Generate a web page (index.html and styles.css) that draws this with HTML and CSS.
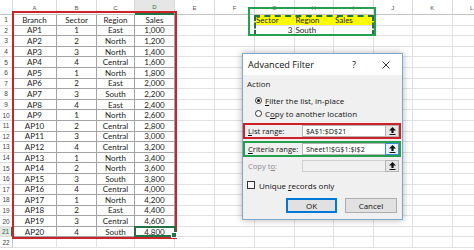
FILE: index.html
```html
<!DOCTYPE html>
<html>
<head>
<meta charset="utf-8">
<link rel="stylesheet" href="styles.css">
</head>
<body>
<div class="sheet">
  <div class="grid">
    <div class="h corner"></div><div class="h">A</div><div class="h">B</div><div class="h">C</div><div class="h sel">D</div><div class="h">E</div><div class="h">F</div><div class="h">G</div><div class="h">H</div><div class="h">I</div><div class="h">J</div><div class="h">K</div><div class="h">L</div>
    <div class="rn">1</div><div class="c t">Branch</div><div class="c t">Sector</div><div class="c t">Region</div><div class="c t">Sales</div><div class="c"></div><div class="c"></div><div class="c y">Sector</div><div class="c y">Region</div><div class="c y">Sales</div><div class="c"></div><div class="c"></div><div class="c"></div>
    <div class="rn">2</div><div class="c t">AP1</div><div class="c t">1</div><div class="c t">East</div><div class="c t">1,000</div><div class="c"></div><div class="c"></div><div class="c r">3</div><div class="c l">South</div><div class="c"></div><div class="c"></div><div class="c"></div><div class="c"></div>
    <div class="rn">3</div><div class="c t">AP2</div><div class="c t">2</div><div class="c t">North</div><div class="c t">1,200</div><div class="c"></div><div class="c"></div><div class="c"></div><div class="c"></div><div class="c"></div><div class="c"></div><div class="c"></div><div class="c"></div>
    <div class="rn">4</div><div class="c t">AP3</div><div class="c t">3</div><div class="c t">North</div><div class="c t">1,400</div><div class="c"></div><div class="c"></div><div class="c"></div><div class="c"></div><div class="c"></div><div class="c"></div><div class="c"></div><div class="c"></div>
    <div class="rn">5</div><div class="c t">AP4</div><div class="c t">4</div><div class="c t">Central</div><div class="c t">1,600</div><div class="c"></div><div class="c"></div><div class="c"></div><div class="c"></div><div class="c"></div><div class="c"></div><div class="c"></div><div class="c"></div>
    <div class="rn">6</div><div class="c t">AP5</div><div class="c t">1</div><div class="c t">North</div><div class="c t">1,800</div><div class="c"></div><div class="c"></div><div class="c"></div><div class="c"></div><div class="c"></div><div class="c"></div><div class="c"></div><div class="c"></div>
    <div class="rn">7</div><div class="c t">AP6</div><div class="c t">2</div><div class="c t">East</div><div class="c t">2,000</div><div class="c"></div><div class="c"></div><div class="c"></div><div class="c"></div><div class="c"></div><div class="c"></div><div class="c"></div><div class="c"></div>
    <div class="rn">8</div><div class="c t">AP7</div><div class="c t">3</div><div class="c t">South</div><div class="c t">2,200</div><div class="c"></div><div class="c"></div><div class="c"></div><div class="c"></div><div class="c"></div><div class="c"></div><div class="c"></div><div class="c"></div>
    <div class="rn">9</div><div class="c t">AP8</div><div class="c t">4</div><div class="c t">East</div><div class="c t">2,400</div><div class="c"></div><div class="c"></div><div class="c"></div><div class="c"></div><div class="c"></div><div class="c"></div><div class="c"></div><div class="c"></div>
    <div class="rn">10</div><div class="c t">AP9</div><div class="c t">1</div><div class="c t">North</div><div class="c t">2,600</div><div class="c"></div><div class="c"></div><div class="c"></div><div class="c"></div><div class="c"></div><div class="c"></div><div class="c"></div><div class="c"></div>
    <div class="rn">11</div><div class="c t">AP10</div><div class="c t">2</div><div class="c t">Central</div><div class="c t">2,800</div><div class="c"></div><div class="c"></div><div class="c"></div><div class="c"></div><div class="c"></div><div class="c"></div><div class="c"></div><div class="c"></div>
    <div class="rn">12</div><div class="c t">AP11</div><div class="c t">3</div><div class="c t">Central</div><div class="c t">3,000</div><div class="c"></div><div class="c"></div><div class="c"></div><div class="c"></div><div class="c"></div><div class="c"></div><div class="c"></div><div class="c"></div>
    <div class="rn">13</div><div class="c t">AP12</div><div class="c t">4</div><div class="c t">Central</div><div class="c t">3,200</div><div class="c"></div><div class="c"></div><div class="c"></div><div class="c"></div><div class="c"></div><div class="c"></div><div class="c"></div><div class="c"></div>
    <div class="rn">14</div><div class="c t">AP13</div><div class="c t">1</div><div class="c t">North</div><div class="c t">3,400</div><div class="c"></div><div class="c"></div><div class="c"></div><div class="c"></div><div class="c"></div><div class="c"></div><div class="c"></div><div class="c"></div>
    <div class="rn">15</div><div class="c t">AP14</div><div class="c t">2</div><div class="c t">North</div><div class="c t">3,600</div><div class="c"></div><div class="c"></div><div class="c"></div><div class="c"></div><div class="c"></div><div class="c"></div><div class="c"></div><div class="c"></div>
    <div class="rn">16</div><div class="c t">AP15</div><div class="c t">3</div><div class="c t">South</div><div class="c t">3,800</div><div class="c"></div><div class="c"></div><div class="c"></div><div class="c"></div><div class="c"></div><div class="c"></div><div class="c"></div><div class="c"></div>
    <div class="rn">17</div><div class="c t">AP16</div><div class="c t">4</div><div class="c t">Central</div><div class="c t">4,000</div><div class="c"></div><div class="c"></div><div class="c"></div><div class="c"></div><div class="c"></div><div class="c"></div><div class="c"></div><div class="c"></div>
    <div class="rn">18</div><div class="c t">AP17</div><div class="c t">1</div><div class="c t">North</div><div class="c t">4,200</div><div class="c"></div><div class="c"></div><div class="c"></div><div class="c"></div><div class="c"></div><div class="c"></div><div class="c"></div><div class="c"></div>
    <div class="rn">19</div><div class="c t">AP18</div><div class="c t">2</div><div class="c t">East</div><div class="c t">4,400</div><div class="c"></div><div class="c"></div><div class="c"></div><div class="c"></div><div class="c"></div><div class="c"></div><div class="c"></div><div class="c"></div>
    <div class="rn">20</div><div class="c t">AP19</div><div class="c t">3</div><div class="c t">Central</div><div class="c t">4,600</div><div class="c"></div><div class="c"></div><div class="c"></div><div class="c"></div><div class="c"></div><div class="c"></div><div class="c"></div><div class="c"></div>
    <div class="rn sel">21</div><div class="c t">AP20</div><div class="c t">4</div><div class="c t">South</div><div class="c t">4,800</div><div class="c"></div><div class="c"></div><div class="c"></div><div class="c"></div><div class="c"></div><div class="c"></div><div class="c"></div><div class="c"></div>
    <div class="rn">22</div><div class="c"></div><div class="c"></div><div class="c"></div><div class="c"></div><div class="c"></div><div class="c"></div><div class="c"></div><div class="c"></div><div class="c"></div><div class="c"></div><div class="c"></div><div class="c"></div>
  </div>

  <div class="overlay">
    <div class="active"></div>
    <div class="marquee"></div>
    <div class="box-green"></div>
    <div class="box-red"></div>
  </div>

  <div class="dialog">
    <div class="titlebar">
      <span class="title">Advanced Filter</span>
      <span class="help">?</span>
      <span class="close"><svg width="8" height="8" viewBox="0 0 8 8"><path d="M0.5 0.5L7.5 7.5M7.5 0.5L0.5 7.5" stroke="#222" stroke-width="0.9" fill="none"/></svg></span>
    </div>
    <div class="dbody">
      <div class="group">Action</div>
      <div class="radio"><span class="rb on"></span><span><u>F</u>ilter the list, in-place</span></div>
      <div class="radio"><span class="rb"></span><span>C<u>o</u>py to another location</span></div>
      <div class="field red">
        <span class="flabel"><u>L</u>ist range:</span>
        <span class="input">$A$1:$D$21</span>
        <span class="ref"><svg width="7" height="8" viewBox="0 0 7 8"><path d="M3.5 0L7 3.6H4.6V6H2.4V3.6H0Z" fill="#111"/><rect x="0.5" y="7" width="6" height="1" fill="#111"/></svg></span>
      </div>
      <div class="field green">
        <span class="flabel"><u>C</u>riteria range:</span>
        <span class="input">Sheet1!$G$1:$I$2</span>
        <span class="ref focus"><svg width="7" height="8" viewBox="0 0 7 8"><path d="M3.5 0L7 3.6H4.6V6H2.4V3.6H0Z" fill="#111"/><rect x="0.5" y="7" width="6" height="1" fill="#111"/></svg></span>
      </div>
      <div class="field copy">
        <span class="flabel dis">Copy t<u>o</u>:</span>
        <span class="input off"></span>
        <span class="ref"><svg width="7" height="8" viewBox="0 0 7 8"><path d="M3.5 0L7 3.6H4.6V6H2.4V3.6H0Z" fill="#111"/><rect x="0.5" y="7" width="6" height="1" fill="#111"/></svg></span>
      </div>
      <div class="check"><span class="cb"></span><span>Unique <u>r</u>ecords only</span></div>
      <div class="buttons">
        <span class="btn ok">OK</span>
        <span class="btn">Cancel</span>
      </div>
    </div>
  </div>
</div>
</body>
</html>
```

FILE: styles.css
```css
* { box-sizing: border-box; }
html, body { margin: 0; padding: 0; }
body {
  width: 474px;
  height: 250px;
  overflow: hidden;
  background: #fff;
  font-family: Lato, "Liberation Sans", sans-serif;
}
.sheet {
  position: relative;
  width: 474px;
  height: 250px;
  overflow: hidden;
}
.grid, .overlay {
  display: grid;
  grid-template-columns: 13px 44px 40px 38px 40px 40px 40px repeat(6, 39.5px);
  grid-template-rows: 15px repeat(22, 10.6px);
  width: 492px;
}
.overlay {
  position: absolute;
  left: 0;
  top: 0;
  pointer-events: none;
}

/* headers */
.h {
  border-right: 1px solid #d9d9d9;
  border-bottom: 1px solid #c4c4c4;
  font-family: "Liberation Sans", sans-serif;
  font-size: 6px;
  color: #555;
  display: flex;
  align-items: center;
  justify-content: center;
  padding-top: 1px;
}
.h.sel {
  background: #e6e6e6;
  border-bottom: 2px solid #217346;
  color: #217346;
}
.rn {
  border-right: 1px solid #c4c4c4;
  border-bottom: 1px solid #dcdcdc;
  font-family: "Liberation Sans", sans-serif;
  font-size: 6.5px;
  color: #444;
  display: flex;
  align-items: center;
  justify-content: center;
}
.rn.sel {
  background: #e6e6e6;
  border-right: 2px solid #217346;
  color: #217346;
}

/* cells */
.c {
  border-right: 1px solid #e1e1e1;
  border-bottom: 1px solid #e1e1e1;
  font-size: 8px;
  color: #222;
  display: flex;
  align-items: center;
  justify-content: center;
  white-space: nowrap;
  overflow: hidden;
}
.c.t { border-color: #a3a3a3; }
.c.y {
  background: #ffff00;
  justify-content: flex-start;
  padding-left: 1px;
  border-right-color: #ffff00;
}
.c.r { justify-content: flex-end; padding-right: 1px; }
.c.l { justify-content: flex-start; padding-left: 1px; }

/* overlays on the sheet grid */
.active {
  grid-column: 5;
  grid-row: 22;
  margin: -1px -1px 0 -1px;
  border: 2px solid #217346;
  position: relative;
}
.active::after {
  content: "";
  position: absolute;
  right: -3px;
  bottom: -3px;
  width: 4px;
  height: 4px;
  background: #217346;
  border: 1px solid #fff;
}
.marquee {
  grid-column: 8 / 11;
  grid-row: 2 / 4;
  margin: 0 0 0 -1px;
  border: 2px dashed #217346;
}
.box-green {
  grid-column: 8 / 11;
  grid-row: 1 / 4;
  margin: 7px -2px 0 -7px;
  border: 2px solid #26a04e;
}
.box-red {
  grid-column: 2 / 6;
  grid-row: 2 / 23;
  margin: -4px -2px -2px -1px;
  border: 2px solid #cc232b;
}

/* dialog */
.dialog {
  position: absolute;
  left: 242px;
  top: 53px;
  width: 161px;
  height: 167px;
  border: 1px solid #7ea6cf;
  background: #f0f0f0;
  box-shadow: 0 0 7px rgba(0, 0, 0, 0.3);
  font-family: "Open Sans", "Noto Sans", sans-serif;
  font-size: 8px;
  color: #111;
  display: flex;
  flex-direction: column;
}
.titlebar {
  height: 21px;
  background: #fff;
  display: flex;
  align-items: center;
  flex: none;
}
.title {
  flex: 1;
  padding-left: 5px;
  font-size: 9.2px;
}
.help {
  width: 30px;
  text-align: center;
  font-size: 9px;
}
.close {
  width: 33px;
  display: flex;
  justify-content: center;
  align-items: center;
}
.dbody {
  padding: 4px 1px 0 0;
  display: flex;
  flex-direction: column;
}
.group {
  height: 10px;
  line-height: 10px;
  margin-left: 4px;
  color: #222;
}
.radio {
  height: 10px;
  display: flex;
  align-items: center;
  margin-left: 12px;
  margin-top: 6px;
  white-space: nowrap;
}
.radio + .radio { margin-top: 3px; }
.rb {
  width: 7px;
  height: 7px;
  border: 1px solid #333;
  border-radius: 50%;
  background: #fff;
  margin-right: 3px;
  position: relative;
  flex: none;
}
.rb.on::after {
  content: "";
  position: absolute;
  left: 1px;
  top: 1px;
  width: 3px;
  height: 3px;
  border-radius: 50%;
  background: #111;
}
.field {
  height: 16px;
  border: 2px solid transparent;
  display: flex;
  align-items: center;
}
.field.red { border-color: #cc232b; margin-top: 5px; }
.field.green { border-color: #26a04e; margin-top: 2px; }
.field.copy { margin-top: 1px; }
.flabel {
  width: 57px;
  padding-left: 3px;
  white-space: nowrap;
  font-size: 7.6px;
}
.flabel.dis { color: #8a8a8a; }
.input {
  width: 83px;
  height: 12px;
  background: #fff;
  border: 1px solid #b5b5b5;
  border-right: none;
  padding-left: 3px;
  line-height: 10px;
  white-space: nowrap;
  overflow: hidden;
  font-size: 7.2px;
}
.input.off {
  background: #f0f0f0;
  border-color: #cfcfcf;
}
.ref {
  width: 14px;
  height: 12px;
  background: #e6e6e6;
  border: 1px solid #b5b5b5;
  display: flex;
  align-items: center;
  justify-content: center;
}
.ref.focus {
  background: #e5f1fb;
  border-color: #3c8fd8;
}
.check {
  height: 10px;
  display: flex;
  align-items: center;
  margin-left: 4px;
  margin-top: 6px;
}
.cb {
  width: 8px;
  height: 8px;
  border: 1px solid #333;
  background: #fff;
  margin-right: 4px;
  flex: none;
}
.buttons {
  display: flex;
  margin-top: 8px;
  margin-left: 43px;
  gap: 8px;
}
.btn {
  width: 52px;
  height: 15px;
  background: #e1e1e1;
  border: 1px solid #adadad;
  display: flex;
  align-items: center;
  justify-content: center;
}
.btn.ok {
  width: 51px;
  border: 1px solid #0078d7;
  box-shadow: inset 0 0 0 1px #0078d7;
}
```
